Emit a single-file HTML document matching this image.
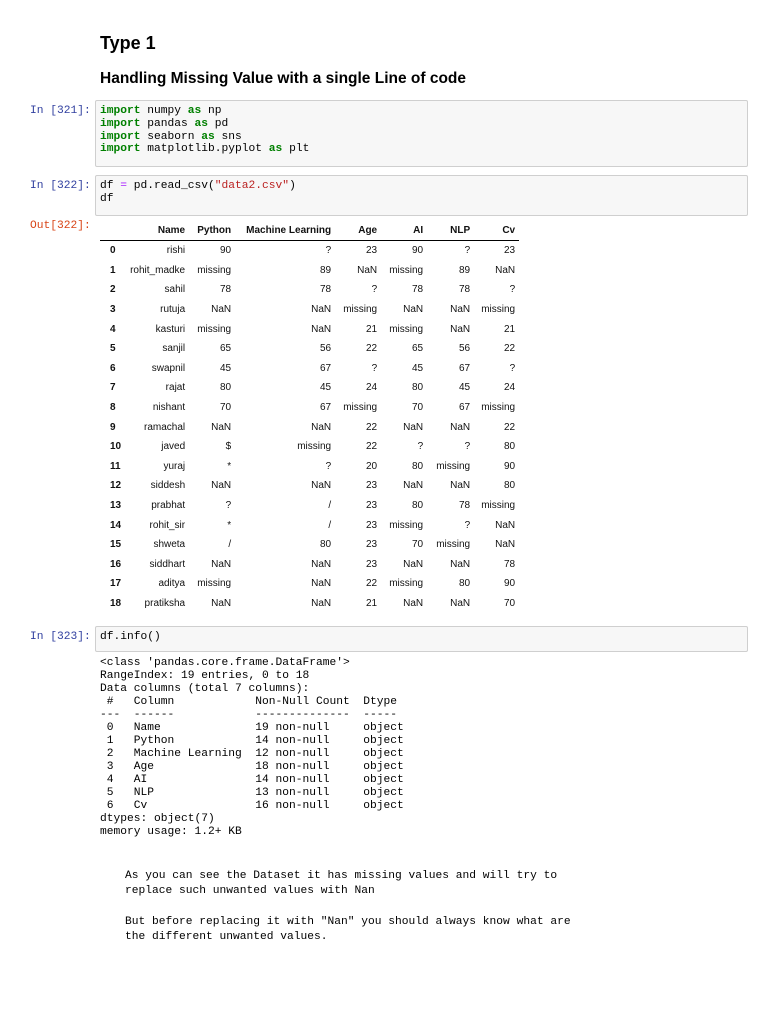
<!DOCTYPE html>
<html><head><meta charset="utf-8"><style>
body{margin:0;background:#fff;width:768px;height:1024px;position:relative;overflow:hidden;font-family:"Liberation Sans",sans-serif;color:#000}
.a{position:absolute;white-space:pre}
.m{font-family:"Liberation Mono",monospace;font-size:11.25px;line-height:12.8px}
.p{color:#303f9f}.o{color:#d84315}
.box{position:absolute;left:95px;width:651px;border:1px solid #cfcfcf;background:#f7f7f7;border-radius:2px}
.k{color:#008000;font-weight:bold}.s{color:#ba2121}.op{color:#aa22ff}
table{position:absolute;left:100px;top:220px;border-collapse:collapse;font-size:10px;table-layout:fixed;color:#111}
td,th{padding:0 4px 0 0;text-align:right;height:19.6px;white-space:nowrap}
th{font-weight:bold;height:20px}
thead tr{border-bottom:1px solid #000}
td:first-child,th:first-child{text-align:left;padding-left:10px;font-weight:bold}
</style></head><body>
<div class="a" style="left:100px;top:33px;font-size:18px;font-weight:bold">Type 1</div>
<div class="a" style="left:100px;top:70px;font-size:15.5px;font-weight:bold">Handling Missing Value with a single Line of code</div>

<div class="a m p" style="left:30px;top:105px">In [321]:</div>
<div class="box" style="top:100px;height:65px"></div>
<div class="a m" style="left:100px;top:105px"><span class="k">import</span> numpy <span class="k">as</span> np
<span class="k">import</span> pandas <span class="k">as</span> pd
<span class="k">import</span> seaborn <span class="k">as</span> sns
<span class="k">import</span> matplotlib.pyplot <span class="k">as</span> plt</div>

<div class="a m p" style="left:30px;top:180px">In [322]:</div>
<div class="box" style="top:175px;height:39px"></div>
<div class="a m" style="left:100px;top:180px">df <span class="op">=</span> pd.read_csv(<span class="s">"data2.csv"</span>)
df</div>
<div class="a m o" style="left:30px;top:220px">Out[322]:</div>

<table>
<colgroup><col style="width:25px"><col style="width:64px"><col style="width:46px"><col style="width:100px"><col style="width:46px"><col style="width:46px"><col style="width:47px"><col style="width:45px"></colgroup>
<thead><tr><th></th><th>Name</th><th>Python</th><th>Machine Learning</th><th>Age</th><th>AI</th><th>NLP</th><th>Cv</th></tr></thead>
<tbody>
<tr><td>0</td><td>rishi</td><td>90</td><td>?</td><td>23</td><td>90</td><td>?</td><td>23</td></tr>
<tr><td>1</td><td>rohit_madke</td><td>missing</td><td>89</td><td>NaN</td><td>missing</td><td>89</td><td>NaN</td></tr>
<tr><td>2</td><td>sahil</td><td>78</td><td>78</td><td>?</td><td>78</td><td>78</td><td>?</td></tr>
<tr><td>3</td><td>rutuja</td><td>NaN</td><td>NaN</td><td>missing</td><td>NaN</td><td>NaN</td><td>missing</td></tr>
<tr><td>4</td><td>kasturi</td><td>missing</td><td>NaN</td><td>21</td><td>missing</td><td>NaN</td><td>21</td></tr>
<tr><td>5</td><td>sanjil</td><td>65</td><td>56</td><td>22</td><td>65</td><td>56</td><td>22</td></tr>
<tr><td>6</td><td>swapnil</td><td>45</td><td>67</td><td>?</td><td>45</td><td>67</td><td>?</td></tr>
<tr><td>7</td><td>rajat</td><td>80</td><td>45</td><td>24</td><td>80</td><td>45</td><td>24</td></tr>
<tr><td>8</td><td>nishant</td><td>70</td><td>67</td><td>missing</td><td>70</td><td>67</td><td>missing</td></tr>
<tr><td>9</td><td>ramachal</td><td>NaN</td><td>NaN</td><td>22</td><td>NaN</td><td>NaN</td><td>22</td></tr>
<tr><td>10</td><td>javed</td><td>$</td><td>missing</td><td>22</td><td>?</td><td>?</td><td>80</td></tr>
<tr><td>11</td><td>yuraj</td><td>*</td><td>?</td><td>20</td><td>80</td><td>missing</td><td>90</td></tr>
<tr><td>12</td><td>siddesh</td><td>NaN</td><td>NaN</td><td>23</td><td>NaN</td><td>NaN</td><td>80</td></tr>
<tr><td>13</td><td>prabhat</td><td>?</td><td>/</td><td>23</td><td>80</td><td>78</td><td>missing</td></tr>
<tr><td>14</td><td>rohit_sir</td><td>*</td><td>/</td><td>23</td><td>missing</td><td>?</td><td>NaN</td></tr>
<tr><td>15</td><td>shweta</td><td>/</td><td>80</td><td>23</td><td>70</td><td>missing</td><td>NaN</td></tr>
<tr><td>16</td><td>siddhart</td><td>NaN</td><td>NaN</td><td>23</td><td>NaN</td><td>NaN</td><td>78</td></tr>
<tr><td>17</td><td>aditya</td><td>missing</td><td>NaN</td><td>22</td><td>missing</td><td>80</td><td>90</td></tr>
<tr><td>18</td><td>pratiksha</td><td>NaN</td><td>NaN</td><td>21</td><td>NaN</td><td>NaN</td><td>70</td></tr>
</tbody></table>

<div class="a m p" style="left:30px;top:631px">In [323]:</div>
<div class="box" style="top:626px;height:24px"></div>
<div class="a m" style="left:100px;top:631px">df.info()</div>
<div class="a m" style="left:100px;top:657px;line-height:13px">&lt;class 'pandas.core.frame.DataFrame'&gt;
RangeIndex: 19 entries, 0 to 18
Data columns (total 7 columns):
 #   Column            Non-Null Count  Dtype 
---  ------            --------------  ----- 
 0   Name              19 non-null     object
 1   Python            14 non-null     object
 2   Machine Learning  12 non-null     object
 3   Age               18 non-null     object
 4   AI                14 non-null     object
 5   NLP               13 non-null     object
 6   Cv                16 non-null     object
dtypes: object(7)
memory usage: 1.2+ KB</div>
<div class="a m" style="left:125px;top:869px;line-height:15.3px">As you can see the Dataset it has missing values and will try to
replace such unwanted values with Nan

But before replacing it with "Nan" you should always know what are
the different unwanted values.</div>
</body></html>
